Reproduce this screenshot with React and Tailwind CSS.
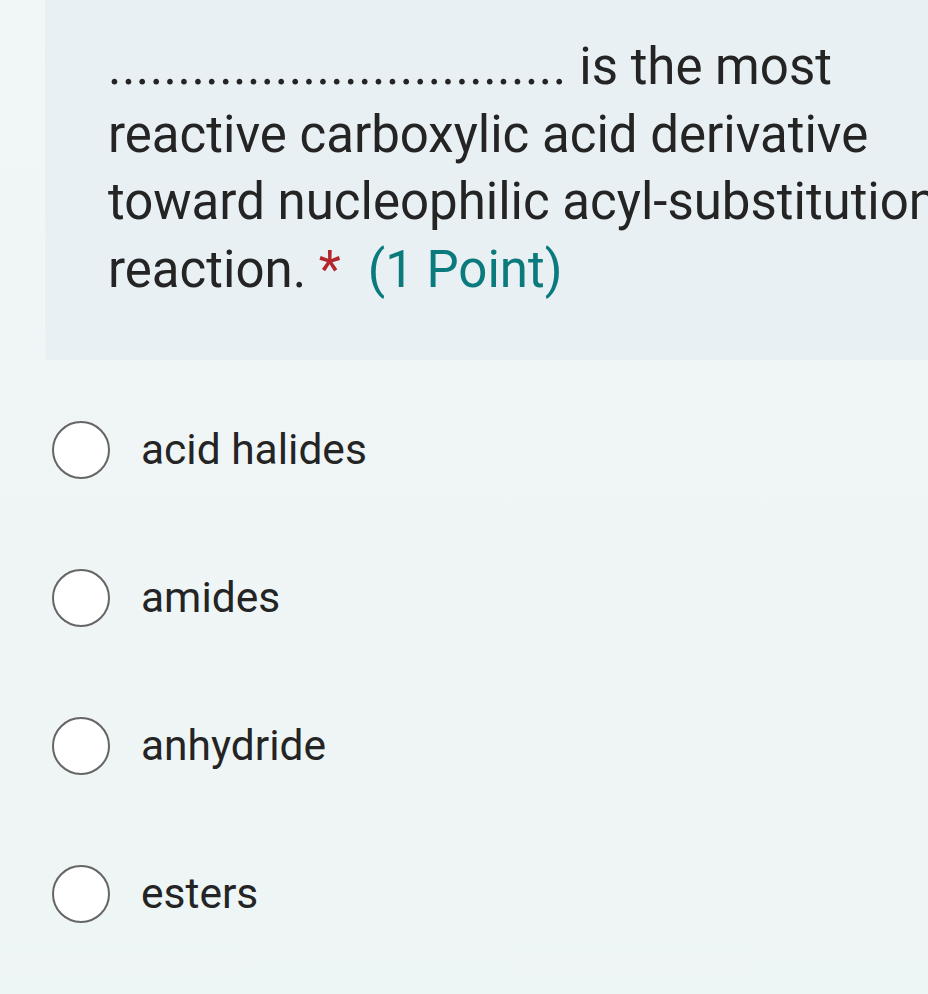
const options = ['acid halides', 'amides', 'anhydride', 'esters'];

export default function App() {
  return (
    <div
      className="w-[928px] h-[994px] overflow-hidden bg-gradient-to-b from-[#f1f6f7] to-[#eef5f5]"
      style={{ fontFamily: 'Roboto, "Noto Sans", sans-serif' }}
    >
      <div className="ml-[45px] h-[360px] bg-[#e8f0f3] pl-[63px] pt-[33px]">
        <div className="text-[51px] leading-[67.5px] text-[#242424] whitespace-nowrap">
          <div>
            <span className="tracking-[0.45px]">.................................</span> is the most
          </div>
          <div>reactive carboxylic acid derivative</div>
          <div>toward nucleophilic acyl-substitution</div>
          <div>
            reaction. <span className="text-[#b3262b]">*</span>
            <span className="ml-[27px] text-[#0a7a7d]">(1 Point)</span>
          </div>
        </div>
      </div>
      <div className="flex flex-col pt-[16px]">
        {options.map((opt) => (
          <label key={opt} className="flex items-center h-[148px] pl-[52px] cursor-pointer">
            <span className="w-[58px] h-[58px] rounded-full border-[2.5px] border-[#656565] bg-white shrink-0" />
            <span className="ml-[31px] text-[42.5px] text-[#242424]">{opt}</span>
          </label>
        ))}
      </div>
    </div>
  );
}
